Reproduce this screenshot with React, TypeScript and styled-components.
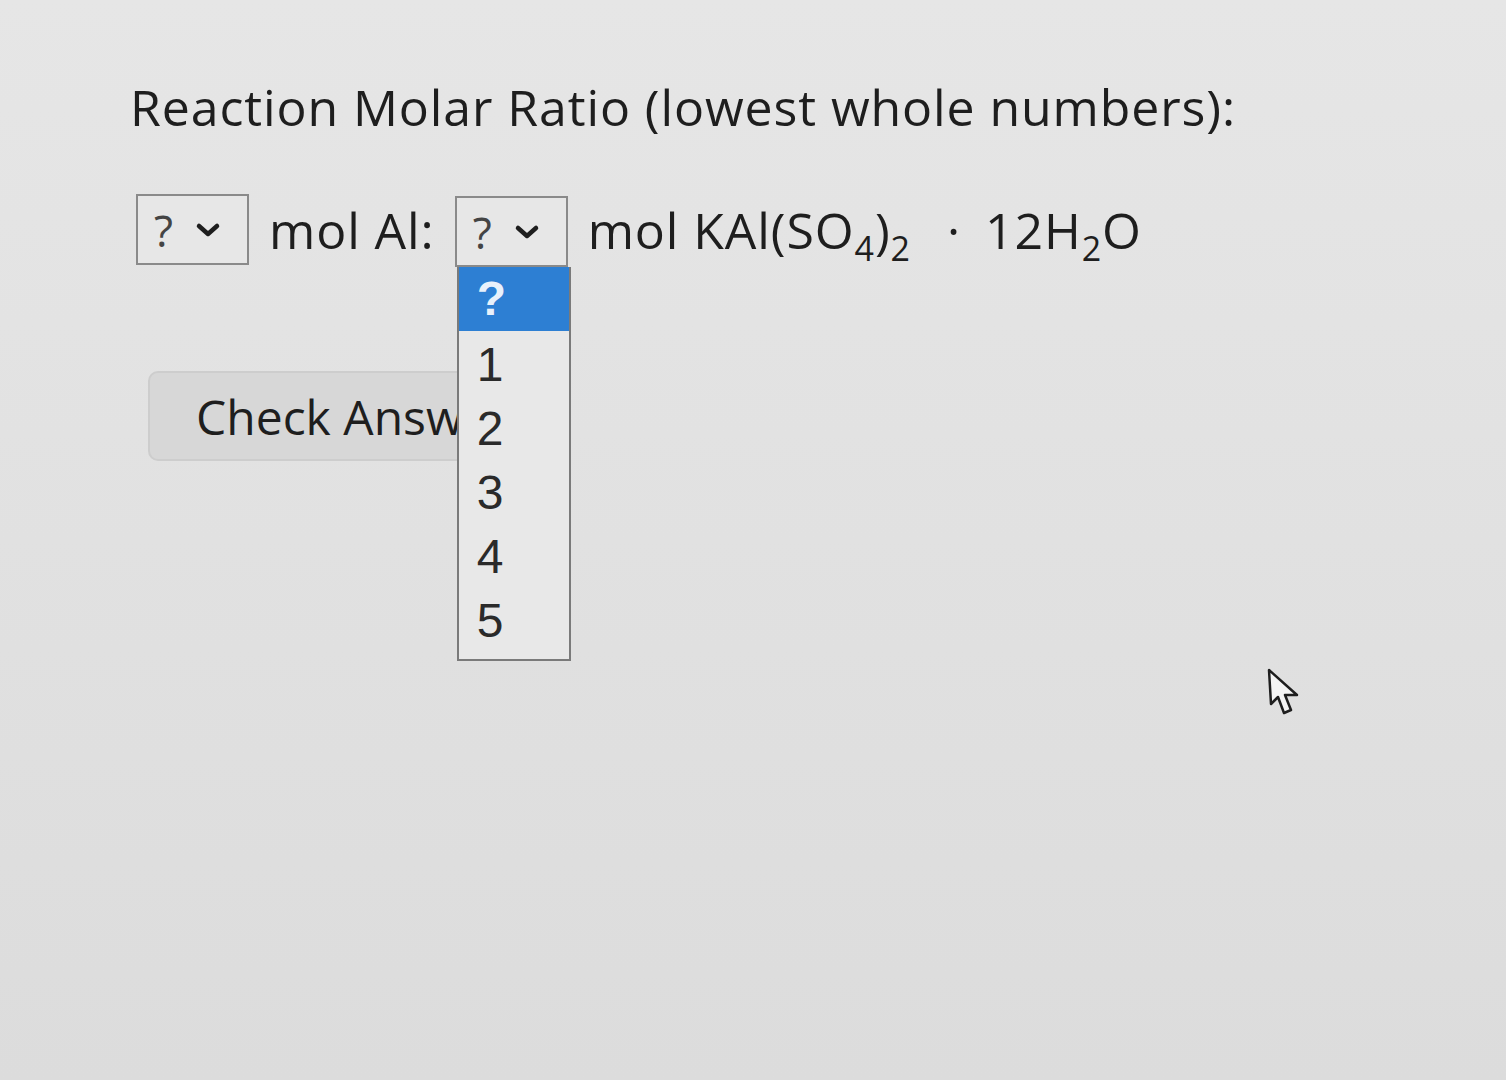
import React from 'react';
import styled, {createGlobalStyle} from 'styled-components';

const GlobalStyle = createGlobalStyle`
  html, body {
    margin: 0;
    padding: 0;
    background: #e2e2e2;
  }
  body {
    font-family: "Open Sans", "DejaVu Sans", sans-serif;
    color: #1e1e1e;
  }
`;

const options = ['?', '1', '2', '3', '4', '5'];

function Chevron() {
  return (
    <svg width="26" height="16" viewBox="0 0 26 16">
      <path
        d="M4 4 L13 12 L22 4"
        fill="none"
        stroke="#1e1e1e"
        strokeWidth="4.5"
        strokeLinecap="round"
        strokeLinejoin="round"
      />
    </svg>
  );
}

function Pointer() {
  return (
    <svg width="40" height="56" viewBox="0 0 40 56">
      <path
        d="M5 4 L7 38 L14 31 L20 47 L27 44 L21 29 L33 29 Z"
        fill="#f4f4f4"
        stroke="#1e1e1e"
        strokeWidth="2.5"
        strokeLinejoin="round"
      />
    </svg>
  );
}

export default function App() {
  return (
    <Page>
      <GlobalStyle />
      <Heading>Reaction Molar Ratio (lowest whole numbers):</Heading>
      <Row>
        <SelectBox>
          <span>?</span>
          <Chevron />
        </SelectBox>
        <Label>mol Al:</Label>
        <SelectWrap>
          <SelectBox $open>
            <span>?</span>
            <Chevron />
          </SelectBox>
          <OptionList>
            {options.map((opt, i) => (
              <OptionItem key={opt} $selected={i === 0}>
                {opt}
              </OptionItem>
            ))}
          </OptionList>
        </SelectWrap>
        <Label>
          mol KAl(SO<Sub>4</Sub>)<Sub>2</Sub>
          <Dot>·</Dot>
          12H<Sub>2</Sub>O
        </Label>
      </Row>
      <CheckButton>Check Answer</CheckButton>
      <Cursor>
        <Pointer />
      </Cursor>
    </Page>
  );
}

const Page = styled.div`
  position: relative;
  width: 1506px;
  height: 1080px;
  box-sizing: border-box;
  padding: 72px 0 0 130px;
  overflow: hidden;
  background: linear-gradient(180deg, #e6e6e6 0%, #e0e0e0 60%, #dcdcdc 100%);
`;

const Heading = styled.h1`
  margin: 0;
  font-size: 50px;
  font-weight: 400;
  line-height: 70px;
  letter-spacing: 0.9px;
`;

const Row = styled.div`
  display: flex;
  align-items: center;
  gap: 20px;
  margin-top: 50px;
  margin-left: 6px;
`;

const SelectWrap = styled.div`
  position: relative;
`;

const SelectBox = styled.div<{$open?: boolean}>`
  display: flex;
  align-items: center;
  gap: 22px;
  box-sizing: border-box;
  width: 113px;
  height: 71px;
  padding-left: 16px;
  border: 2px solid #8a8a8a;
  background: #e7e7e7;
  font-size: 44px;
  color: #444;
  margin-top: ${p => (p.$open ? '4px' : '0')};
`;

const Label = styled.span`
  font-size: 50px;
  line-height: 70px;
  letter-spacing: 0.9px;
  white-space: nowrap;
`;

const Sub = styled.sub`
  font-size: 34px;
  vertical-align: -12px;
  line-height: 0;
`;

const Dot = styled.span`
  margin: 0 24px 0 36px;
`;

const OptionList = styled.ul`
  position: absolute;
  top: 75px;
  left: 2px;
  z-index: 2;
  width: 114px;
  margin: 0;
  padding: 0 0 6px;
  list-style: none;
  box-sizing: border-box;
  border: 2px solid #7a7a7a;
  border-top: none;
  background: #e8e8e8;
  font-family: "Liberation Sans", Arial, sans-serif;
`;

const OptionItem = styled.li<{$selected?: boolean}>`
  height: 64px;
  line-height: 64px;
  padding-left: 18px;
  font-size: 48px;
  font-weight: ${p => (p.$selected ? 700 : 400)};
  color: ${p => (p.$selected ? '#e8f1fb' : '#2a2a2a')};
  background: ${p => (p.$selected ? '#2d7fd3' : 'transparent')};
  margin-bottom: ${p => (p.$selected ? '2px' : '0')};
`;

const CheckButton = styled.button`
  display: block;
  margin: 104px 0 0 18px;
  width: 360px;
  height: 90px;
  padding: 0 0 0 46px;
  text-align: left;
  font-family: "Open Sans", "DejaVu Sans", sans-serif;
  font-size: 48px;
  color: #1e1e1e;
  background: #d7d7d7;
  border: 2px solid #cdcdcd;
  border-radius: 10px;
  white-space: nowrap;
  overflow: hidden;
`;

const Cursor = styled.div`
  position: absolute;
  left: 1264px;
  top: 666px;
`;
